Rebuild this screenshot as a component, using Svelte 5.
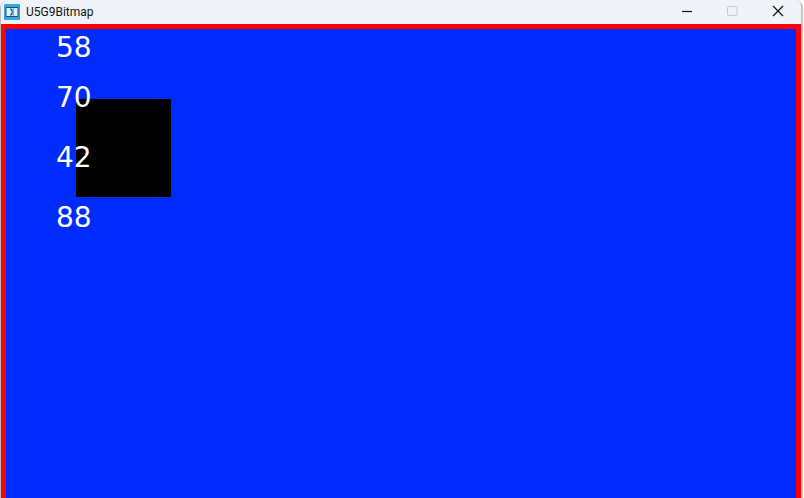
<script>
  const values = [
    { text: '58', height: 33 },
    { text: '70', height: 50 },
    { text: '42', height: 60 },
    { text: '88', height: 60 }
  ];
</script>

<div class="window">
  <header class="titlebar">
    <div class="title">
      <svg class="app-icon" width="16" height="16" viewBox="0 0 16 16" aria-hidden="true">
        <rect x="0" y="0" width="16" height="16" rx="1" fill="#35a8e8" />
        <rect x="1.5" y="3" width="13" height="10" fill="#1f4f7f" />
        <rect x="2.5" y="4" width="11" height="8" fill="#e4f0f8" />
        <path d="M6.5 4.5l2.5 3.5-2.5 3.5" fill="none" stroke="#1f4f7f" stroke-width="1.3" />
        <path d="M10 4.5l-2 3.5 2 3.5" fill="none" stroke="#2f9be0" stroke-width="1.3" />
      </svg>
      <span>U5G9Bitmap</span>
    </div>
    <div class="controls">
      <svg class="ctl" width="46" height="24" viewBox="0 0 46 24" aria-hidden="true">
        <path d="M19 11.5h10" stroke="#111" stroke-width="1.2" />
      </svg>
      <svg class="ctl" width="46" height="24" viewBox="0 0 46 24" aria-hidden="true">
        <rect x="18.5" y="6.5" width="9.5" height="9" rx="1" fill="none" stroke="#c6c8cc" stroke-width="1" />
      </svg>
      <svg class="ctl" width="46" height="24" viewBox="0 0 46 24" aria-hidden="true">
        <path d="M18 6l10 10M28 6l-10 10" stroke="#111" stroke-width="1.2" />
      </svg>
    </div>
  </header>
  <main class="client">
    <div class="square"></div>
    {#each values as v}
      <div class="value" style="height: {v.height}px">{v.text}</div>
    {/each}
  </main>
</div>

<style>
  :global(body) {
    margin: 0;
    background: #fff;
    overflow: hidden;
  }
  .window {
    box-sizing: border-box;
    width: 803px;
    height: 498px;
    border-left: 1px solid #b9b9b9;
    border-right: 2px solid #c4c4c4;
    border-top-right-radius: 8px;
    border-top-left-radius: 8px;
    overflow: hidden;
    display: flex;
    flex-direction: column;
    background: #eff3f9;
  }
  .titlebar {
    height: 24px;
    flex: none;
    display: flex;
    justify-content: space-between;
    align-items: center;
    background: #eff3f9;
  }
  .title {
    display: flex;
    align-items: center;
    gap: 6px;
    padding-left: 3px;
    font: 12px Roboto, sans-serif;
    color: #111;
  }
  .app-icon {
    display: block;
  }
  .controls {
    display: flex;
  }
  .ctl {
    display: block;
  }
  .client {
    position: relative;
    flex: 1;
    box-sizing: border-box;
    border: 5px solid #ff0000;
    border-bottom: 0;
    background: #002bff;
    padding-left: 50px;
    font: 28px "DejaVu Sans", sans-serif;
    color: #fff;
  }
  .value {
    display: flex;
    align-items: flex-end;
    line-height: 1;
    position: relative;
  }
  .square {
    position: absolute;
    left: 70px;
    top: 70px;
    width: 95px;
    height: 98px;
    background: #000;
  }
</style>
